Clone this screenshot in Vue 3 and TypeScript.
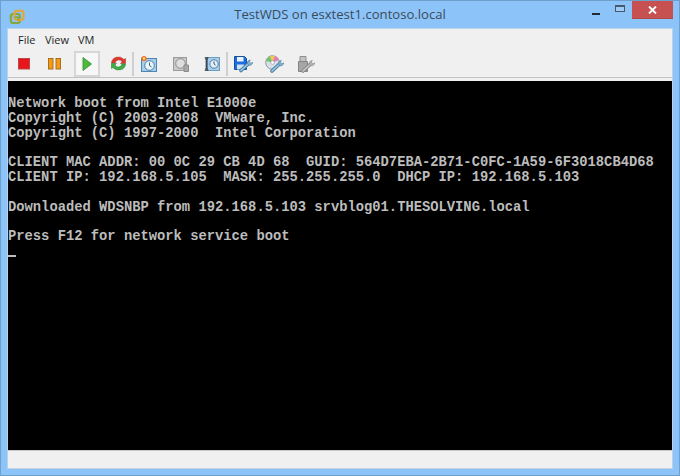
<script setup lang="ts">
const lines: string[] = [
  '',
  'Network boot from Intel E1000e',
  'Copyright (C) 2003-2008  VMware, Inc.',
  'Copyright (C) 1997-2000  Intel Corporation',
  '',
  'CLIENT MAC ADDR: 00 0C 29 CB 4D 68  GUID: 564D7EBA-2B71-C0FC-1A59-6F3018CB4D68',
  'CLIENT IP: 192.168.5.105  MASK: 255.255.255.0  DHCP IP: 192.168.5.103',
  '',
  'Downloaded WDSNBP from 192.168.5.103 srvblog01.THESOLVING.local',
  '',
  'Press F12 for network service boot',
]
</script>

<template>
  <div class="window">
    <header class="titlebar">
      <div class="app-icon">
        <svg width="16" height="16" viewBox="0 0 16 16">
          <rect x="1.8" y="5" width="9" height="9" rx="2.2" fill="none" stroke="#87a63c" stroke-width="2.2" />
          <rect x="5.5" y="1.8" width="9" height="9" rx="2.2" fill="none" stroke="#dfa73c" stroke-width="2.2" />
          <path d="M5.5 8h3.5v3" fill="none" stroke="#87a63c" stroke-width="1.6" />
        </svg>
      </div>
      <div class="title">TestWDS on esxtest1.contoso.local</div>
      <div class="controls">
        <div class="ctl min"><span></span></div>
        <div class="ctl max"><span></span></div>
        <div class="ctl close">
          <svg width="9" height="8" viewBox="0 0 9 8">
            <path d="M1 .5l7 7M8 .5l-7 7" stroke="#fff" stroke-width="1.9" fill="none" />
          </svg>
        </div>
      </div>
    </header>

    <div class="client">
      <nav class="menu">
        <span class="file">File</span>
        <span class="view">View</span>
        <span>VM</span>
      </nav>

      <div class="toolbar">
        <div class="tool">
          <svg width="16" height="16" viewBox="0 0 16 16">
            <rect x="2.5" y="2.5" width="11" height="10.5" fill="#e8151a" stroke="#b8474a" />
          </svg>
        </div>
        <div class="tool">
          <svg width="16" height="16" viewBox="0 0 16 16">
            <rect x="1.5" y="2.5" width="4.5" height="10.5" fill="#f59a12" stroke="#a8701e" />
            <rect x="9" y="2.5" width="4.5" height="10.5" fill="#f59a12" stroke="#a8701e" />
          </svg>
        </div>
        <div class="tool active">
          <svg width="16" height="16" viewBox="0 0 16 16">
            <path d="M4 1.5L12.5 8 4 14.5z" fill="#4cb83c" stroke="#3f9a40" stroke-linejoin="round" />
          </svg>
        </div>
        <div class="tool tight">
          <svg width="17" height="17" viewBox="0 0 17 17">
            <path d="M1.5 8A7 6.5 0 0 1 14 4.5l1.5-1v5h-5l1.6-1.6A3.8 3.8 0 0 0 5 8z" fill="#e4342c" stroke="#a83a34" stroke-width=".6" />
            <path d="M15.5 9A7 6.5 0 0 1 3 12.5l-1.5 1v-5h5L4.9 10.1A3.8 3.8 0 0 0 12 9z" fill="#3cae44" stroke="#2f7f38" stroke-width=".6" />
          </svg>
        </div>
        <i class="sep"></i>
        <div class="tool wide">
          <svg width="18" height="18" viewBox="0 0 18 18">
            <rect x="1.5" y="3.5" width="15" height="13" fill="#a8cde8" stroke="#4a86b8" />
            <circle cx="9.5" cy="10.5" r="4.8" fill="#e9f3fa" stroke="#4a7ea8" />
            <path d="M9.5 7.5v3l2 1.4" fill="none" stroke="#3a5f80" />
            <circle cx="4" cy="3.5" r="2.6" fill="#f26a22" />
            <circle cx="4" cy="3.5" r="1.2" fill="#ffe27a" />
          </svg>
        </div>
        <div class="tool">
          <svg width="18" height="18" viewBox="0 0 18 18">
            <rect x="1.5" y="2.5" width="13" height="13" fill="#c9c9c9" stroke="#9a9a9a" />
            <circle cx="8.5" cy="8.5" r="4.8" fill="#dedede" stroke="#8c8c8c" />
            <path d="M12 10h4.5v6.5H12z" fill="#a8a8a8" stroke="#8c8c8c" />
          </svg>
        </div>
        <div class="tool tight">
          <svg width="18" height="18" viewBox="0 0 18 18">
            <rect x="4.5" y="2.5" width="12" height="13" fill="#a8cde8" stroke="#6c9cc0" />
            <circle cx="11" cy="9" r="4.2" fill="#e4eff8" stroke="#4a7ea8" />
            <path d="M11 6.5V9l1.6 1.2" fill="none" stroke="#3a5f80" />
            <path d="M2 2.5h3.2L4 5v8l1.2 2.5H2L3 13V5z" fill="#50616f" stroke="#303d48" stroke-width=".7" />
          </svg>
        </div>
        <i class="sep"></i>
        <div class="tool">
          <svg width="20" height="18" viewBox="0 0 20 18">
            <path d="M1.5 1.5h10l2 2v11h-12z" fill="#1d6ce0" stroke="#174f9c" />
            <rect x="4" y="2" width="6.5" height="4.5" fill="#eaf2fc" />
            <rect x="4" y="9.5" width="7" height="5" fill="#cfe0f5" />
            <path d="M8 15.5l7-6.5" stroke="#4a7ea0" stroke-width="3.6" stroke-linecap="round" />
            <path d="M8 15.5l7-6.5" stroke="#9ccbe4" stroke-width="1.6" stroke-linecap="round" />
            <path d="M14.5 8.5a3.2 3.2 0 0 1 2.8-3.6l-1 2 1.6 1.4 1.8-1a3.2 3.2 0 0 1-4 3z" fill="#7fb4d4" stroke="#4a7ea0" stroke-width=".6" />
          </svg>
        </div>
        <div class="tool wide">
          <svg width="20" height="18" viewBox="0 0 20 18">
            <circle cx="8.5" cy="7.5" r="6.8" fill="#d8dfe6" stroke="#8d99a4" />
            <path d="M8.5 7.5L6 1.5A7 7 0 0 1 11 1z" fill="#f2c94a" />
            <path d="M8.5 7.5L11 1a7 7 0 0 1 4 4z" fill="#e77ab8" />
            <path d="M8.5 7.5L2 6a7 7 0 0 1 4-4.5z" fill="#6fc56a" />
            <circle cx="8.5" cy="7.5" r="1.8" fill="#fff" stroke="#8d99a4" stroke-width=".6" />
            <path d="M8 16l7-6.5" stroke="#4a7ea0" stroke-width="3.6" stroke-linecap="round" />
            <path d="M8 16l7-6.5" stroke="#9ccbe4" stroke-width="1.6" stroke-linecap="round" />
            <path d="M14.5 9a3.2 3.2 0 0 1 2.8-3.6l-1 2 1.6 1.4 1.8-1a3.2 3.2 0 0 1-4 3z" fill="#7fb4d4" stroke="#4a7ea0" stroke-width=".6" />
          </svg>
        </div>
        <div class="tool">
          <svg width="20" height="18" viewBox="0 0 20 18">
            <path d="M4 1.5h6v5H4z" fill="#c4c4c4" stroke="#8e8e8e" />
            <path d="M2.5 6.5h9v10h-9z" fill="#a6a6a6" stroke="#858585" />
            <path d="M7 16l7-6.5" stroke="#8a8a8a" stroke-width="3.6" stroke-linecap="round" />
            <path d="M7 16l7-6.5" stroke="#c8c8c8" stroke-width="1.6" stroke-linecap="round" />
            <path d="M13.5 9a3.2 3.2 0 0 1 2.8-3.6l-1 2 1.6 1.4 1.8-1a3.2 3.2 0 0 1-4 3z" fill="#b4b4b4" stroke="#8a8a8a" stroke-width=".6" />
          </svg>
        </div>
      </div>

      <div class="console">
        <div v-for="(line, i) in lines" :key="i" class="row">{{ line }}</div>
        <div class="cursor"></div>
      </div>

      <footer class="status"></footer>
    </div>
  </div>
</template>

<style>
html, body { margin: 0; background: #8cc4f9; }
</style>

<style scoped>
.window {
  box-sizing: border-box;
  width: 680px;
  height: 476px;
  background: #8cc4f9;
  border: 1px solid #6f9fcb;
  padding: 0 6px 6px;
  display: flex;
  flex-direction: column;
  font-family: "Open Sans", "Noto Sans", sans-serif;
}
.titlebar {
  height: 27px;
  flex: none;
  display: grid;
  grid-template-columns: 1fr auto 1fr;
  align-items: start;
}
.app-icon { padding: 7px 0 0 2px; height: 16px; }
.title {
  font-size: 13.1px;
  line-height: 27px;
  color: #3d4a57;
}
.controls { display: flex; justify-content: flex-end; }
.ctl { height: 18px; display: flex; align-items: center; justify-content: center; }
.min { width: 24px; }
.min span { width: 8px; height: 2px; background: #202a33; margin-top: 7px; }
.max { width: 24px; }
.max span { box-sizing: border-box; width: 10px; height: 7px; border: 1px solid #46596c; border-top-width: 2px; background: #9ccbf6; margin-top: -3px; }
.close { width: 41px; background: #c75050; border-bottom: 1px solid #b04747; box-sizing: border-box; }
.client {
  flex: 1;
  display: flex;
  flex-direction: column;
  background: #f0f0f0;
  border: 1px solid #b9d3ea;
  border-bottom-color: #c3d3e2;
  min-height: 0;
}
.menu {
  height: 21px;
  flex: none;
  display: flex;
  align-items: center;
  padding-left: 10px;
  font-size: 11px;
  color: #1f1f1f;
}
.menu .file { width: 27px; }
.menu .view { width: 33px; }
.toolbar {
  height: 27px;
  flex: none;
  display: flex;
  align-items: center;
  padding-left: 4px;
  border-bottom: 1px solid #c4c4c4;
}
.tool {
  box-sizing: border-box;
  width: 24px;
  height: 26px;
  margin-right: 7px;
  flex: none;
  display: flex;
  align-items: center;
  justify-content: center;
  border: 2px solid transparent;
}
.tool.active { width: 26px; margin-right: 6px; border-color: #d6d6d6; background: #f7f7f7; }
.tool.tight { margin-right: 2px; }
.tool.wide { margin-right: 8px; }
.sep { width: 2px; height: 24px; background: #cfcfcf; margin-right: 3px; flex: none; }
.console {
  box-sizing: border-box;
  margin-top: 3px;
  padding-top: 1.5px;
  height: 369px;
  flex: none;
  background: #000;
  color: #bcbcbc;
  font-family: "Liberation Mono", "DejaVu Sans Mono", monospace;
  font-weight: 700;
  font-size: 13.8px;
  overflow: hidden;
}
.row { height: 14.76px; line-height: 14.76px; white-space: pre; }
.cursor { width: 8px; height: 2px; margin-top: 10px; background: #bcbcbc; }
.status { flex: 1; border-top: 1px solid #c8c8c8; background: #f0f0f0; }
</style>
